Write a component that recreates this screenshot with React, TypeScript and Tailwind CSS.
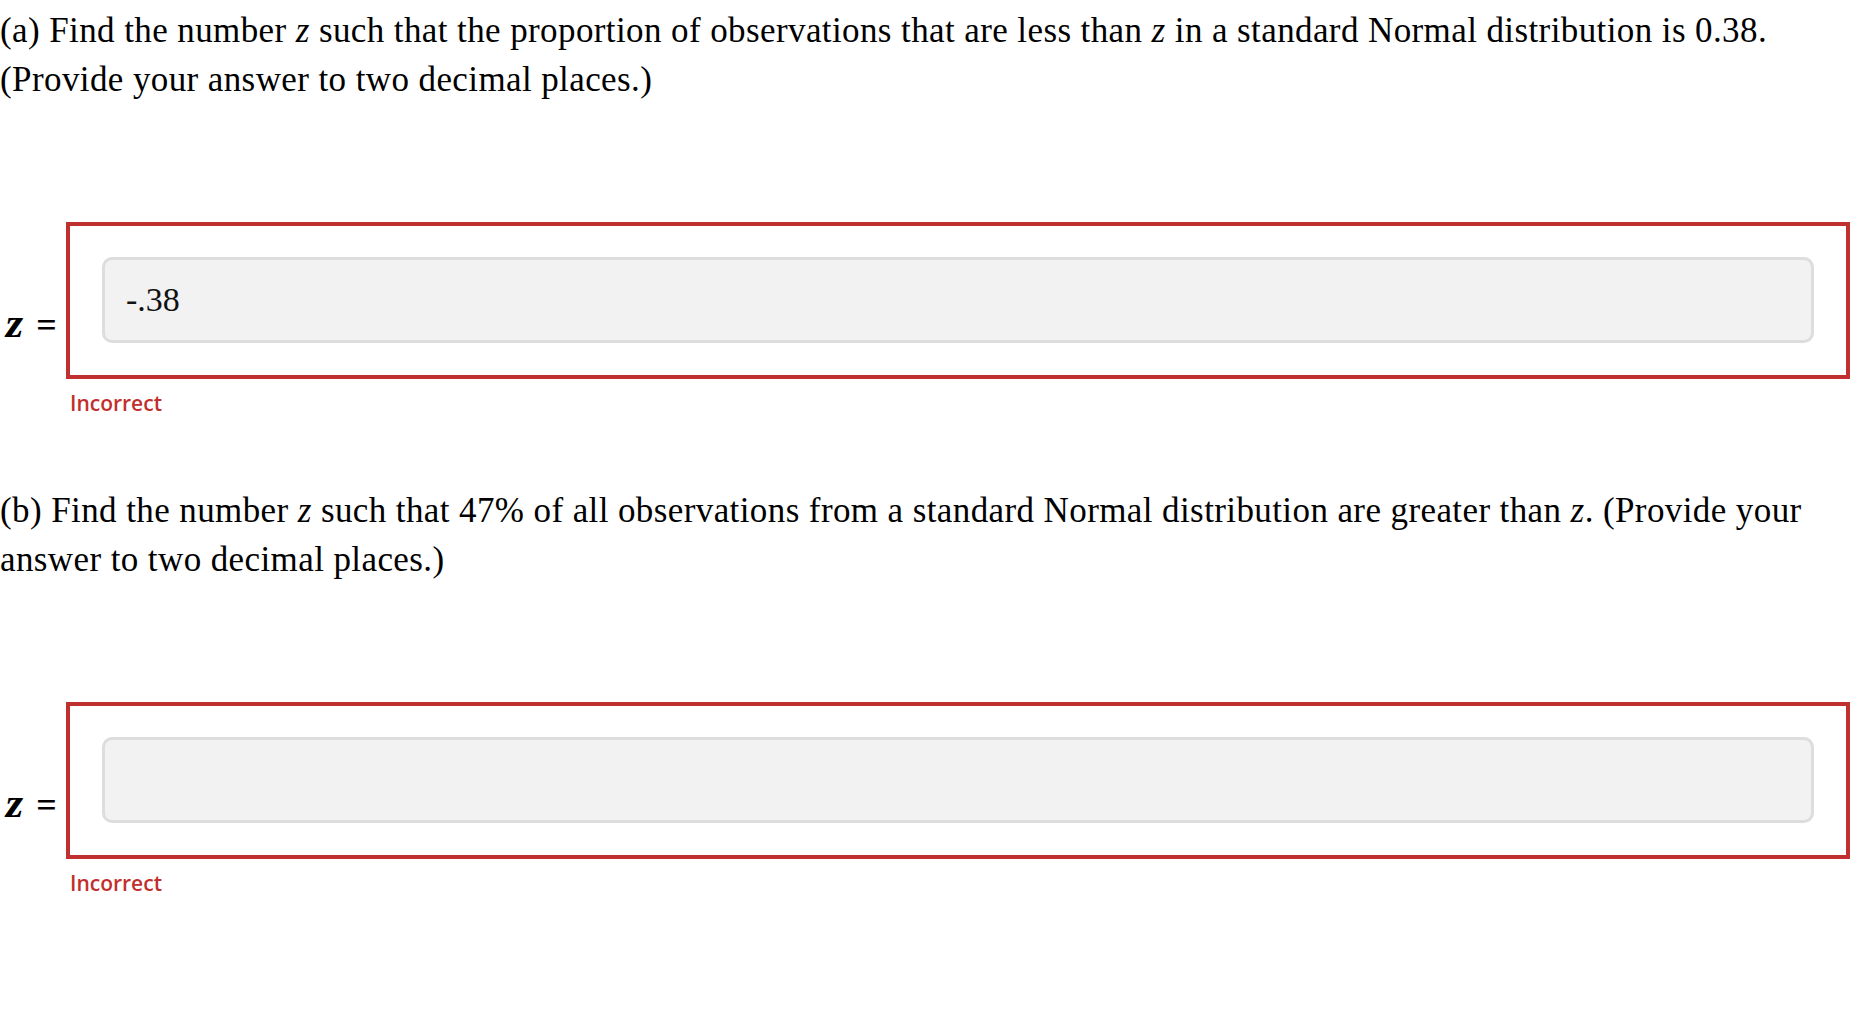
const serif = "font-['Liberation_Serif','Times_New_Roman',serif]";

function Part({ letter, text, value }: { letter: string; text: React.ReactNode; value: string }) {
  return (
    <div>
      <p className={`${serif} text-[35px] leading-[49.4px] tracking-[0.4px] text-black`}>
        ({letter}) {text}
      </p>
      <div className="mt-[117px] flex items-start">
        <div className="w-[66px] shrink-0 h-[157px] flex items-end">
          <span className={`${serif} text-[36px] leading-[36px] mb-[36px] pl-[7px] text-black whitespace-nowrap`}>
            <i className="inline-block font-bold text-[39px] scale-x-[1.15]">z</i>
            <span className="ml-[14px] font-semibold">=</span>
          </span>
        </div>
        <div className="flex-1">
          <div className="border-4 border-[#c0302e] pt-[31px] pb-[32px] px-[32px]">
            <div className="h-[86px] rounded-[10px] border-[3px] border-[#dddddd] bg-[#f2f2f2] flex items-center pl-[21px]">
              <span className={`${serif} text-[34px] text-[#111]`}>{value}</span>
            </div>
          </div>
          <div className="mt-[12px] pl-[4px] font-['Open_Sans','Lato',sans-serif] text-[21px] leading-[24px] font-semibold text-[#c0302e]">
            Incorrect
          </div>
        </div>
      </div>
    </div>
  );
}

export default function App() {
  return (
    <div className="w-[1850px] pt-[6px] bg-white min-h-screen">
      <Part
        letter="a"
        value="-.38"
        text={
          <>
            Find the number <i>z</i> such that the proportion of observations that are less than <i>z</i> in a standard Normal
            distribution is 0.38. (Provide your answer to two decimal places.)
          </>
        }
      />
      <div className="mt-[71px]">
        <Part
          letter="b"
          value=""
          text={
            <>
              Find the number <i>z</i> such that 47% of all observations from a standard Normal distribution are greater than{" "}
              <i>z</i>. (Provide your answer to two decimal places.)
            </>
          }
        />
      </div>
    </div>
  );
}
